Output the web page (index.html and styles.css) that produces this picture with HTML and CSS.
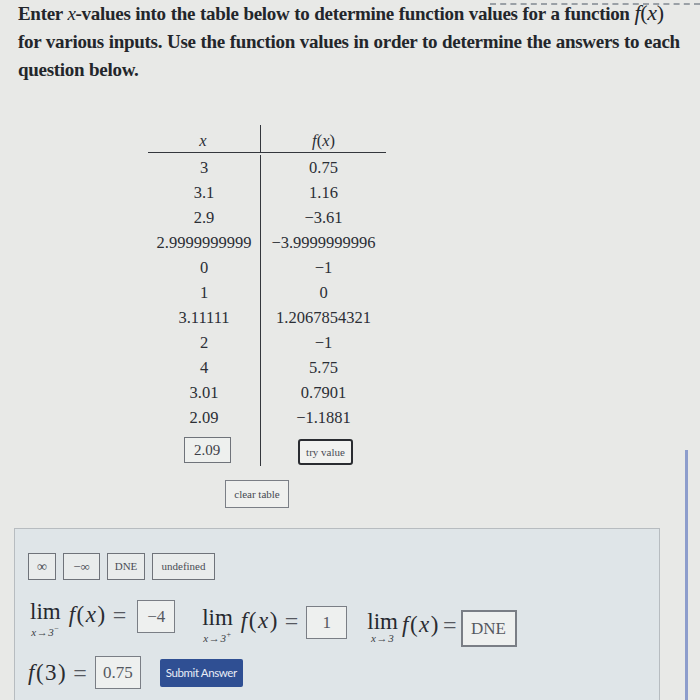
FILE: index.html
```html
<!DOCTYPE html>
<html>
<head>
<meta charset="utf-8">
<link rel="stylesheet" href="styles.css">
</head>
<body>
<div class="page">
  <div class="dash"></div>
  <p class="intro">Enter <i class="mv">x</i>-values into the table below to determine function values for a function <i class="mv big">f</i><span class="big">(</span><i class="mv big">x</i><span class="big">)</span> for various inputs. Use the function values in order to determine the answers to each question below.</p>

  <div class="tbl">
    <div class="cell l head"><i>x</i></div>
    <div class="cell r head"><i>f</i>(<i>x</i>)</div>
    <div class="cell l">3</div><div class="cell r">0.75</div>
    <div class="cell l">3.1</div><div class="cell r">1.16</div>
    <div class="cell l">2.9</div><div class="cell r">−3.61</div>
    <div class="cell l">2.9999999999</div><div class="cell r">−3.9999999996</div>
    <div class="cell l">0</div><div class="cell r">−1</div>
    <div class="cell l">1</div><div class="cell r">0</div>
    <div class="cell l">3.11111</div><div class="cell r">1.2067854321</div>
    <div class="cell l">2</div><div class="cell r">−1</div>
    <div class="cell l">4</div><div class="cell r">5.75</div>
    <div class="cell l">3.01</div><div class="cell r">0.7901</div>
    <div class="cell l">2.09</div><div class="cell r">−1.1881</div>
    <div class="cell l inrow"><span class="xin">2.09</span></div>
    <div class="cell r inrow"><span class="try">try value</span></div>
  </div>
  <div class="clearrow"><span class="clear">clear table</span></div>

  <div class="panel">
    <div class="chips">
      <span class="chip c1">∞</span>
      <span class="chip c2">−∞</span>
      <span class="chip c3">DNE</span>
      <span class="chip c4">undefined</span>
    </div>
    <div class="limits">
      <div class="lim lim1">
        <span class="limop"><span class="limw">lim</span><span class="limsub">x→3<sup>−</sup></span></span>
        <span class="expr"><i>f</i>(<i>x</i>)</span><span class="eq">=</span>
        <span class="ans a1">−4</span>
      </div>
      <div class="lim lim2">
        <span class="limop"><span class="limw">lim</span><span class="limsub">x→3<sup>+</sup></span></span>
        <span class="expr"><i>f</i>(<i>x</i>)</span><span class="eq">=</span>
        <span class="ans a2">1</span>
      </div>
      <div class="lim lim3">
        <span class="limop"><span class="limw">lim</span><span class="limsub">x→3</span></span>
        <span class="expr"><i>f</i>(<i>x</i>)</span><span class="eq">=</span>
        <span class="ans a3">DNE</span>
      </div>
    </div>
    <div class="frow">
      <span class="expr"><i>f</i>(3)</span><span class="eq">=</span>
      <span class="ans a4">0.75</span>
      <span class="submit">Submit Answer</span>
    </div>
  </div>
  <div class="edge"></div>
</div>
</body>
</html>
```

FILE: styles.css
```css
html, body {
  margin: 0;
  padding: 0;
}
body {
  background: #e8e9e7;
  width: 700px;
  height: 700px;
  overflow: hidden;
  font-family: "Liberation Serif", "DejaVu Serif", serif;
  color: #2a2c30;
}
.page {
  position: relative;
  height: 700px;
}
.dash {
  margin-left: 490px;
  padding-top: 3px;
  border-bottom: 2px dashed #9aa0a6;
  height: 0;
}
.intro {
  margin: 0;
  padding: 0 0 0 18px;
  width: 682px;
  box-sizing: border-box;
  font-weight: bold;
  font-size: 19px;
  line-height: 28px;
  letter-spacing: -0.3px;
  word-spacing: 0.4px;
  color: #23262b;
  position: relative;
  top: -5px;
}
.intro .mv {
  font-weight: normal;
}
.intro .big {
  font-size: 22px;
  font-weight: normal;
  line-height: 20px;
}
.tbl {
  margin-top: 36px;
  margin-left: 148px;
  display: grid;
  grid-template-columns: 112px 126px;
  width: 238px;
  font-size: 16.5px;
  color: #2b2e35;
}
.cell {
  height: 25px;
  line-height: 25px;
  text-align: center;
}
.cell.r {
  border-left: 1.5px solid #33363c;
}
.cell.head {
  height: 27px;
  line-height: 32px;
  border-bottom: 1.5px solid #33363c;
  margin-bottom: 2px;
}
.cell.l.head {
  padding-right: 2px;
}
.cell.inrow {
  height: 36px;
  display: flex;
  align-items: center;
  justify-content: center;
}
.cell.l.inrow {
  padding-left: 6px;
  padding-top: 4px;
  box-sizing: border-box;
}
.cell.r.inrow {
  padding-top: 8px;
  box-sizing: border-box;
}
.xin {
  display: inline-block;
  width: 45px;
  height: 24px;
  line-height: 24px;
  border: 1.5px solid #6f737a;
  background: #eef0ee;
  font-size: 15px;
  color: #3d4048;
}
.try {
  display: inline-block;
  width: 51px;
  height: 22px;
  line-height: 22px;
  border: 2.5px solid #2a2c31;
  border-radius: 3px;
  background: #f1f2f0;
  font-size: 11px;
  color: #4a4d55;
  margin-left: 4px;
}
.clearrow {
  margin-top: 14px;
  margin-left: 225px;
}
.clear {
  display: inline-block;
  width: 62px;
  height: 26px;
  line-height: 26px;
  text-align: center;
  border: 1.5px solid #7b7f86;
  background: #eff0ee;
  font-size: 11px;
  color: #454850;
}
.panel {
  margin-top: 20px;
  margin-left: 14px;
  width: 646px;
  height: 200px;
  background: #dfe5e8;
  border: 1.5px solid #b7bcc0;
  box-sizing: border-box;
  padding: 24px 0 0 13px;
}
.chips {
  display: flex;
  gap: 7px;
}
.chip {
  height: 25px;
  line-height: 25px;
  border: 1.5px solid #6f737a;
  background: #e9ecec;
  text-align: center;
  font-size: 11px;
  color: #4a4d55;
}
.c1 { width: 26px; font-size: 14px; }
.c2 { width: 35px; font-size: 13px; }
.c3 { width: 36px; }
.c4 { width: 61px; }
.limits {
  display: flex;
  align-items: flex-start;
  margin-top: 20px;
  height: 52px;
}
.lim {
  display: flex;
  align-items: flex-start;
}
.lim2 { margin-left: 25px; margin-top: 6px; }
.lim3 { margin-left: 18px; margin-top: 10px; }
.limop {
  display: inline-flex;
  flex-direction: column;
  align-items: center;
  margin-top: 1px;
  margin-left: 2px;
}
.limw {
  font-size: 23px;
  line-height: 21px;
  color: #25282e;
}
.limsub {
  font-size: 11px;
  line-height: 13px;
  color: #3b3e45;
  font-style: italic;
  white-space: nowrap;
  letter-spacing: 0.6px;
}
.limsub sup {
  font-size: 8px;
  font-style: normal;
}
.expr {
  font-size: 23px;
  line-height: 30px;
  margin-left: 8px;
  color: #2a2c31;
  white-space: nowrap;
  letter-spacing: 1.5px;
}
.eq {
  font-size: 24px;
  line-height: 30px;
  margin: 0 8px 0 6px;
  color: #55585f;
}
.lim1 .eq { margin-right: 11px; }
.lim3 .expr { margin-left: 4px; }
.lim3 .eq { margin: 0 4px 0 3px; }
.ans {
  display: inline-block;
  height: 31px;
  line-height: 31px;
  text-align: center;
  border: 1.5px solid #7a7e85;
  background: #eef0ef;
  font-size: 17px;
  color: #55585f;
  flex: none;
}
.a1 { width: 36px; }
.a2 { width: 39px; }
.a3 { width: 52px; border-width: 2px; height: 33px; line-height: 33px; }
.a4 { width: 44px; }
.frow {
  display: flex;
  align-items: center;
  margin-top: 4px;
}
.frow .expr {
  margin-left: 0;
}
.submit {
  margin-left: 19px;
  display: inline-block;
  width: 83px;
  height: 28px;
  line-height: 28px;
  text-align: center;
  background: #2f4f93;
  color: #e8ecf6;
  font-family: Lato, "Liberation Sans", sans-serif;
  font-size: 11.5px;
  letter-spacing: -0.4px;
  border-radius: 2px;
}
.edge {
  position: absolute;
  right: 12px;
  top: 450px;
  width: 3px;
  height: 250px;
  background: #8d9dcc;
}
```
